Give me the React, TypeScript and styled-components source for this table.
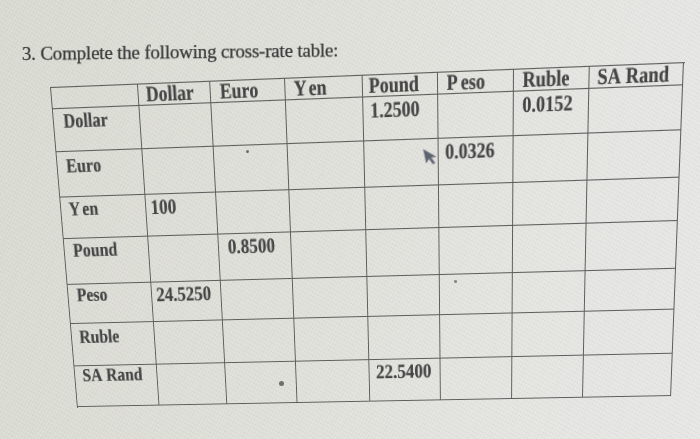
import React from "react";
import styled, { createGlobalStyle } from "styled-components";

const GlobalStyle = createGlobalStyle`
  html, body { margin: 0; padding: 0; }
  body { width: 700px; height: 439px; overflow: hidden; background: #dfdfda; }
`;

type Pt = [number, number];

function solveLinear(A: number[][], b: number[]): number[] {
  const n = b.length;
  const M = A.map((row, i) => [...row, b[i]]);
  for (let c = 0; c < n; c++) {
    let p = c;
    for (let r = c + 1; r < n; r++) if (Math.abs(M[r][c]) > Math.abs(M[p][c])) p = r;
    const tmp = M[c];
    M[c] = M[p];
    M[p] = tmp;
    for (let r = 0; r < n; r++) {
      if (r === c) continue;
      const f = M[r][c] / M[c][c];
      for (let k = c; k <= n; k++) M[r][k] -= f * M[c][k];
    }
  }
  return M.map((row, i) => row[n] / row[i]);
}

function homography(src: Pt[], dst: Pt[]): string {
  const A: number[][] = [];
  const b: number[] = [];
  for (let i = 0; i < 4; i++) {
    const [x, y] = src[i];
    const [u, v] = dst[i];
    A.push([x, y, 1, 0, 0, 0, -x * u, -y * u]);
    b.push(u);
    A.push([0, 0, 0, x, y, 1, -x * v, -y * v]);
    b.push(v);
  }
  const h = solveLinear(A, b);
  const m = [h[0], h[3], 0, h[6], h[1], h[4], 0, h[7], 0, 0, 1, 0, h[2], h[5], 0, 1];
  return `matrix3d(${m.map((v) => v.toFixed(8)).join(",")})`;
}

const TABLE_W = 635;
const TABLE_H = 321;

// The photographed sheet is seen at an angle: map the flat table onto the quad of the photo.
const PERSPECTIVE = homography(
  [
    [0, 0],
    [TABLE_W, 0],
    [0, TABLE_H],
    [TABLE_W, TABLE_H],
  ],
  [
    [0, 0],
    [635, -25],
    [27, 321],
    [622, 310],
  ]
);

const LINE = "#5c5c5a";

const Page = styled.div`
  position: relative;
  width: 700px;
  height: 439px;
  box-sizing: border-box;
  padding: 43px 0 0 22px;
  overflow: hidden;
  background:
    repeating-linear-gradient(118deg, rgba(255, 255, 255, 0.14) 0 1px, transparent 1px 3px),
    repeating-linear-gradient(28deg, rgba(120, 120, 110, 0.05) 0 1px, transparent 1px 4px),
    linear-gradient(100deg, #d8d9d1 0%, #dfdfd9 45%, #e4e4e1 80%, #e6e6e4 100%);
`;

const Title = styled.p`
  margin: 0;
  font-family: "Liberation Serif", "Times New Roman", serif;
  font-size: 19px;
  line-height: 22px;
  letter-spacing: -0.2px;
  color: #383838;
  -webkit-text-stroke: 0.25px #383838;
  white-space: nowrap;
  transform: rotate(-0.65deg);
  transform-origin: 0 100%;
  filter: blur(0.2px);
`;

const Grid = styled.div`
  margin: 22px 0 0 28px;
  width: ${TABLE_W}px;
  height: ${TABLE_H}px;
  box-sizing: border-box;
  display: grid;
  grid-template-columns: 89.6px 74.8px 76.1px 77.4px 74.7px 75.9px 73.2px 91.8px;
  grid-template-rows: 20.1px 41.1px 43.7px 41.5px 45.2px 40.5px 44px 43.4px;
  border-top: 1.5px solid ${LINE};
  border-left: 1.5px solid ${LINE};
  transform-origin: 0 0;
  transform: ${PERSPECTIVE};
  filter: blur(0.25px);
`;

const Cell = styled.div<{ $pl: number; $pt: number; $label?: boolean }>`
  box-sizing: border-box;
  border-right: 1.5px solid ${LINE};
  border-bottom: 1.5px solid ${LINE};
  padding: ${(p) => p.$pt}px 0 0 ${(p) => p.$pl}px;
  font-family: "Liberation Serif", "Times New Roman", serif;
  font-weight: 700;
  font-size: ${(p) => (p.$label ? 17 : 18)}px;
  line-height: 20px;
  color: #444444;
  white-space: nowrap;
  font-kerning: none;
  text-shadow: 0 0 0.6px rgba(40, 40, 40, 0.45);
`;

const Txt = styled.span`
  display: inline-block;
  transform: scaleY(1.14);
  transform-origin: 0 80%;
`;

const Gap = styled.span<{ $w: number }>`
  margin-right: ${(p) => p.$w}px;
`;

const Cursor = styled.svg`
  position: absolute;
  left: 424px;
  top: 147px;
  width: 13px;
  height: 19px;
  filter: blur(0.6px);
  transform: rotate(-12deg);
`;

const Speck = styled.span<{ $size: number; $tone: string }>`
  position: absolute;
  width: ${(p) => p.$size}px;
  height: ${(p) => p.$size}px;
  border-radius: 50%;
  background: ${(p) => p.$tone};
  filter: blur(0.5px);
`;

type Row = { label: React.ReactNode; key: string; pl: number; dy: number; values: [number, string, number][] };

const yen = (
  <>
    <Gap $w={2}>Y</Gap>en
  </>
);

const headers: { text: React.ReactNode; pl: number }[] = [
  { text: "", pl: 0 },
  { text: "Dollar", pl: 8 },
  { text: "Euro", pl: 9 },
  { text: yen, pl: 8 },
  { text: "Pound", pl: 6 },
  {
    text: (
      <>
        <Gap $w={3}>P</Gap>eso
      </>
    ),
    pl: 9,
  },
  { text: "Ruble", pl: 8 },
  { text: "SA Rand", pl: 8 },
];

const rows: Row[] = [
  { key: "dollar", label: "Dollar", pl: 10, dy: 3, values: [[3, "1.2500", 7], [5, "0.0152", 8]] },
  { key: "euro", label: "Euro", pl: 9, dy: 5, values: [[4, "0.0326", 7]] },
  { key: "yen", label: yen, pl: 8, dy: 3, values: [[0, "100", 5]] },
  { key: "pound", label: "Pound", pl: 9, dy: 3, values: [[1, "0.8500", 9]] },
  { key: "peso", label: "Peso", pl: 9, dy: 2, values: [[0, "24.5250", 5]] },
  { key: "ruble", label: "Ruble", pl: 8, dy: 5, values: [] },
  { key: "rand", label: "SA Rand", pl: 8, dy: 1, values: [[3, "22.5400", 7]] },
];

export default function App() {
  return (
    <>
      <GlobalStyle />
      <Page>
        <Title>3. Complete the following cross-rate table:</Title>
        <Grid>
          {headers.map((h, i) => (
            <Cell key={`h${i}`} $pl={h.pl} $pt={0}>
              <Txt>{h.text}</Txt>
            </Cell>
          ))}
          {rows.map((r) => (
            <React.Fragment key={r.key}>
              <Cell $pl={r.pl} $pt={r.dy} $label>
                <Txt>{r.label}</Txt>
              </Cell>
              {Array.from({ length: 7 }, (_, c) => {
                const v = r.values.find((x) => x[0] === c);
                return (
                  <Cell key={c} $pl={v ? v[2] : 0} $pt={3}>
                    {v ? <Txt>{v[1]}</Txt> : null}
                  </Cell>
                );
              })}
            </React.Fragment>
          ))}
        </Grid>
        <Cursor viewBox="0 0 13 19">
          <path
            d="M1 1 L1 15 L4.6 11.6 L7.4 17.6 L9.6 16.6 L6.9 10.8 L11.8 10.8 Z"
            fill="#5d646e"
            stroke="#8a9099"
            strokeWidth="0.8"
          />
        </Cursor>
        <Speck style={{ left: 279, top: 381 }} $size={5} $tone="#6e6e6e" />
        <Speck style={{ left: 246, top: 150 }} $size={3} $tone="#6a6a6a" />
        <Speck style={{ left: 454, top: 280 }} $size={2.5} $tone="#8a8a86" />
      </Page>
    </>
  );
}
